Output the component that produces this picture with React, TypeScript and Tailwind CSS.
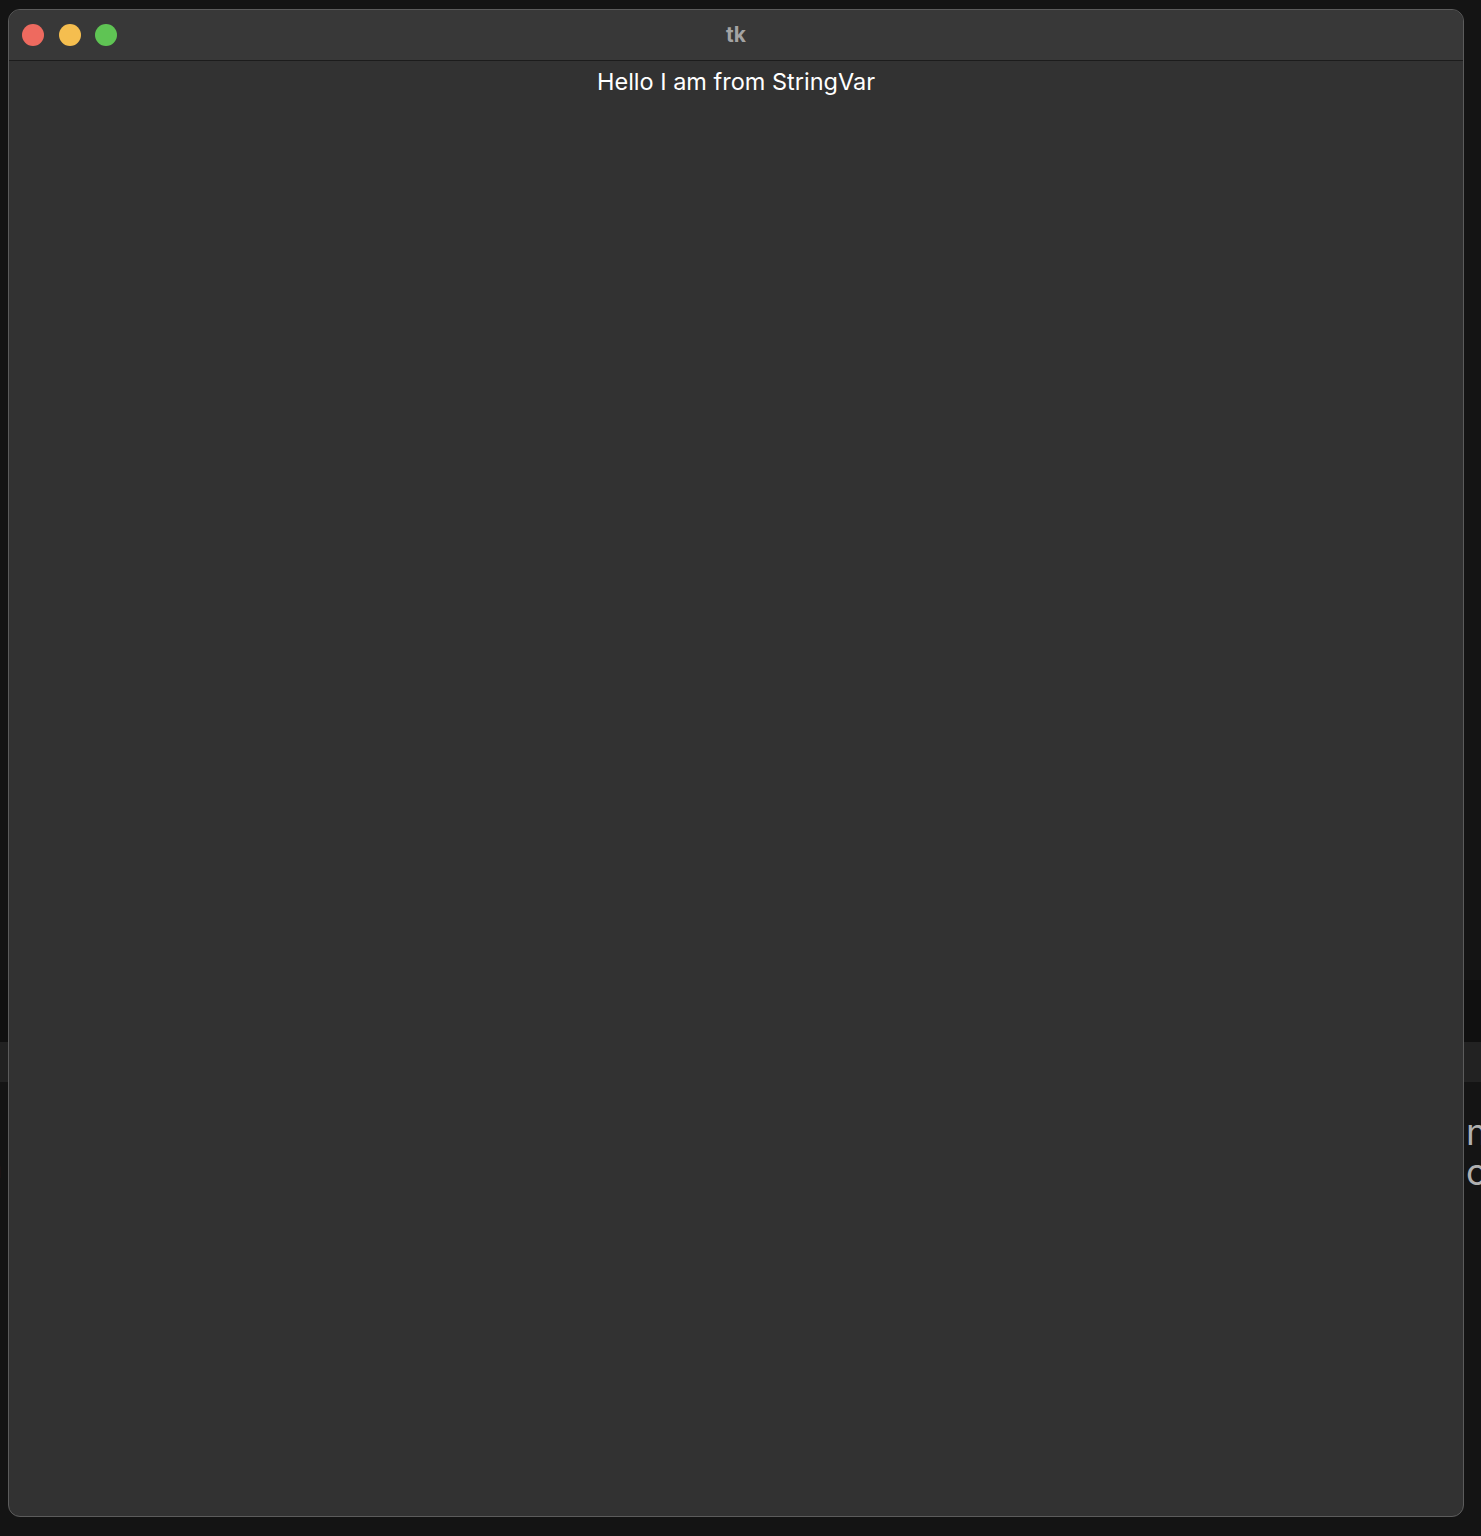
import React from 'react';

const TrafficLight = ({ color }: { color: string }) => (
  <span className={`block h-[22px] w-[22px] rounded-full ${color}`} />
);

export default function App() {
  return (
    <div
      className="relative h-[1536px] w-[1481px] overflow-hidden bg-[#141414]"
      style={{ fontFamily: 'Inter, "Liberation Sans", Arial, sans-serif' }}
    >
      {/* desktop behind the window */}
      <div className="absolute left-0 right-0 top-[980px] h-[62px] bg-[#101010]" />
      <div className="absolute left-0 right-0 top-[1042px] h-[40px] bg-[#222222]" />
      <div className="absolute left-[1466px] top-[1112px] text-[36px] leading-[40px] text-[#b0b0b0]">
        n
        <br />
        c
      </div>
      <div className="absolute left-[-14px] top-[1150px] text-[28px] leading-[36px] text-[#9a9a9a]">
        a
        <br />
        r
      </div>

      {/* tk window */}
      <div className="relative z-10 ml-[8px] mt-[9px] flex h-[1508px] w-[1456px] flex-col overflow-hidden rounded-[12px] border border-[#5c5c5c] bg-[#323232]">
        <div className="relative flex h-[51px] shrink-0 items-center border-b border-[#1c1c1c] bg-[#383838] px-[13px]">
          <div className="flex items-center gap-[14.5px]">
            <TrafficLight color="bg-[#ee6a5f]" />
            <TrafficLight color="bg-[#f5be4f]" />
            <TrafficLight color="bg-[#5fc454]" />
          </div>
          <div className="absolute inset-x-0 top-0 flex h-full items-center justify-center text-[21px] font-bold text-[#a3a3a3]">
            tk
          </div>
        </div>
        <div className="flex-1">
          <p className="pt-[7px] text-center text-[23.5px] leading-[28px] text-white">
            Hello I am from StringVar
          </p>
        </div>
      </div>
    </div>
  );
}
